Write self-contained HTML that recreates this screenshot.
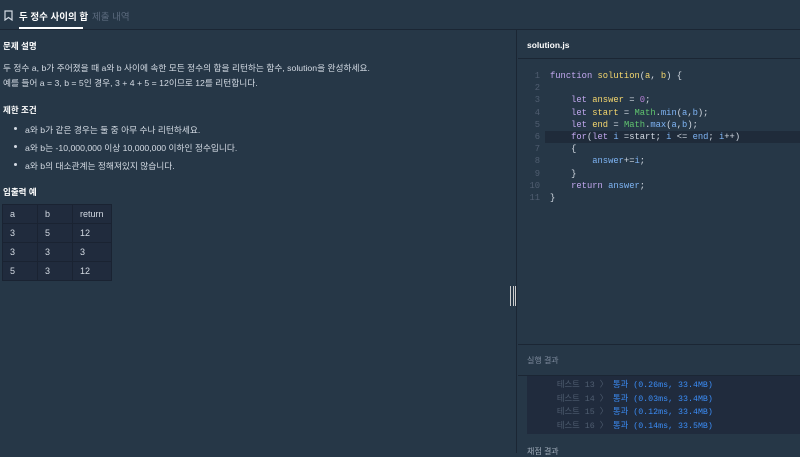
<!DOCTYPE html>
<html><head><meta charset="utf-8"><style>
*{margin:0;padding:0;box-sizing:border-box}
body{width:800px;height:453px;overflow:hidden;background:#263747;font-family:"Liberation Sans","Noto Sans CJK KR",sans-serif;color:#d3dae3;position:relative}
.top{position:absolute;left:0;top:0;width:800px;height:30px;border-bottom:1px solid #1b2634;background:#263747}
.tab{position:absolute;top:9px;font-size:9.5px;font-weight:bold;color:#fff}
.left{position:absolute;left:0;top:30px;width:517px;height:423px;border-right:1px solid #1b2634}
h4{position:absolute;left:3px;font-size:8.5px;color:#fff;font-weight:bold}
.p{position:absolute;left:3px;font-size:8.7px;color:#d3dae3}
.li{position:absolute;left:25px;font-size:8.7px}
.li:before{content:"";position:absolute;left-12px;left:-11px;top:4px;width:3px;height:3px;border-radius:50%;background:#d3dae3}
table{position:absolute;left:2px;top:204px;border-collapse:collapse;background:#202b3d;font-size:9px}
td{border:1px solid #1a2332;height:19px;padding-left:7px;width:35px}
td:last-child{width:39px}
.fn{position:absolute;left:527px;top:40px;font-size:8.5px;font-weight:bold;color:#fff}
.ed{position:absolute;left:518px;top:58px;width:282px;border-top:1px solid #1b2634}
.code{position:absolute;left:518px;top:70px;font-family:"Liberation Mono",monospace;font-size:8.8px;line-height:12.2px;white-space:pre;color:#d3dae3}
.ln{display:inline-block;width:22px;text-align:right;color:#4f5d70;margin-right:10px}
.k{color:#c2a8ef}.f{color:#f5d76e}.m{color:#60c46f}.b{color:#7fb5f5}.n{color:#b67fd6}
.hl{position:absolute;left:545px;top:131px;width:255px;height:12px;background:#1f2b3a}
</style></head><body>
<div class="top">
<svg style="position:absolute;left:4px;top:10px" width="9" height="11"><path d="M1 1H8V10L4.5 7.5L1 10Z" fill="none" stroke="#d3dae3" stroke-width="1.2"/></svg>
<div class="tab" style="left:19px">두 정수 사이의 합</div>
<div class="tab" style="left:92px;color:#5b6a7d;font-weight:normal">제출 내역</div>
<div style="position:absolute;left:19px;top:27px;width:64px;height:2px;background:#fff"></div>
</div>
<div class="left"></div>
<h4 style="top:40px">문제 설명</h4>
<div class="p" style="top:61px">두 정수 a, b가 주어졌을 때 a와 b 사이에 속한 모든 정수의 합을 리턴하는 함수, solution을 완성하세요.</div>
<div class="p" style="top:76px">예를 들어 a = 3, b = 5인 경우, 3 + 4 + 5 = 12이므로 12를 리턴합니다.</div>
<h4 style="top:104px">제한 조건</h4>
<div class="li" style="top:123px">a와 b가 같은 경우는 둘 중 아무 수나 리턴하세요.</div>
<div class="li" style="top:141px">a와 b는 -10,000,000 이상 10,000,000 이하인 정수입니다.</div>
<div class="li" style="top:159px">a와 b의 대소관계는 정해져있지 않습니다.</div>
<h4 style="top:186px">입출력 예</h4>
<table><tr><td>a</td><td>b</td><td>return</td></tr><tr><td>3</td><td>5</td><td>12</td></tr><tr><td>3</td><td>3</td><td>3</td></tr><tr><td>5</td><td>3</td><td>12</td></tr></table>
<div style="position:absolute;left:510px;top:286px;width:6px;height:20px;border-left:1px solid #ccc;border-right:1px solid #ccc"><div style="margin-left:1.5px;width:1px;height:20px;background:#ccc"></div></div>
<div class="fn">solution.js</div>
<div class="ed"></div>
<div class="hl"></div>
<div class="code"><span class="ln">1</span><span class="k">function</span> <span class="f">solution</span>(<span class="f">a</span>, <span class="f">b</span>) {
<span class="ln">2</span>
<span class="ln">3</span>    <span class="k">let</span> <span class="f">answer</span> = <span class="n">0</span>;
<span class="ln">4</span>    <span class="k">let</span> <span class="f">start</span> = <span class="m">Math</span>.<span class="b">min</span>(<span class="b">a</span>,<span class="b">b</span>);
<span class="ln">5</span>    <span class="k">let</span> <span class="f">end</span> = <span class="m">Math</span>.<span class="b">max</span>(<span class="b">a</span>,<span class="b">b</span>);
<span class="ln">6</span>    <span class="k">for</span>(<span class="k">let</span> <span class="b">i</span> =start; <span class="b">i</span> &lt;= <span class="b">end</span>; <span class="b">i</span>++)
<span class="ln">7</span>    {
<span class="ln">8</span>        <span class="b">answer</span>+=<span class="b">i</span>;
<span class="ln">9</span>    }
<span class="ln">10</span>    <span class="k">return</span> <span class="b">answer</span>;
<span class="ln">11</span>}</div>
<div style="position:absolute;left:518px;top:344px;width:282px;border-top:1px solid #1b2634;height:32px;border-bottom:1px solid #1b2634"></div>
<div style="position:absolute;left:527px;top:355px;font-size:8px;color:#7d8a9c">실행 결과</div>
<div style="position:absolute;left:527px;top:376px;width:273px;height:58px;background:#202b3d;font-family:'Liberation Mono','Noto Sans CJK KR',monospace;font-size:8.3px;line-height:13.5px;padding-top:3px;white-space:pre"><div><span style="color:#4f5d70">      테스트 13 〉 </span><span style="color:#3b8cf5">통과 (0.26ms, 33.4MB)</span></div><div><span style="color:#4f5d70">      테스트 14 〉 </span><span style="color:#3b8cf5">통과 (0.03ms, 33.4MB)</span></div><div><span style="color:#4f5d70">      테스트 15 〉 </span><span style="color:#3b8cf5">통과 (0.12ms, 33.4MB)</span></div><div><span style="color:#4f5d70">      테스트 16 〉 </span><span style="color:#3b8cf5">통과 (0.14ms, 33.5MB)</span></div></div>
<div style="position:absolute;left:527px;top:446px;font-size:8px;color:#a0acba">채점 결과</div>
</body></html>
